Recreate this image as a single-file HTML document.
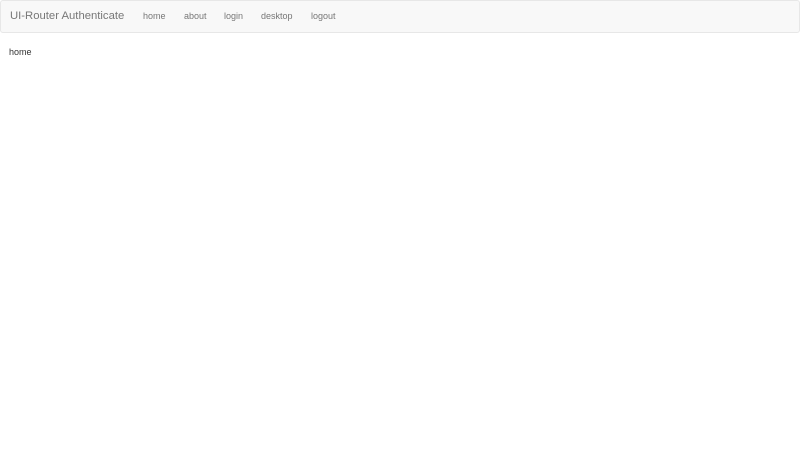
<!DOCTYPE html>
<html><head><style>
body{margin:0;font-family:"Liberation Sans",Arial,sans-serif;color:#333;background:#fff;}
.nav{position:absolute;left:0;top:0;width:798px;height:31px;background:#f8f8f8;border:1px solid #e7e7e7;border-radius:3px;}
.brand{position:absolute;left:9px;top:9px;font-size:11.3px;color:#777;}
.l{position:absolute;top:10px;font-size:9px;color:#777;}
.c{position:absolute;left:9px;top:47px;font-size:9px;color:#333;}
</style></head><body>
<div class="nav">
<span class="brand">UI-Router Authenticate</span>
<span class="l" style="left:142px">home</span>
<span class="l" style="left:183px">about</span>
<span class="l" style="left:223px">login</span>
<span class="l" style="left:260px">desktop</span>
<span class="l" style="left:310px">logout</span>
</div>
<div class="c">home</div>
</body></html>
